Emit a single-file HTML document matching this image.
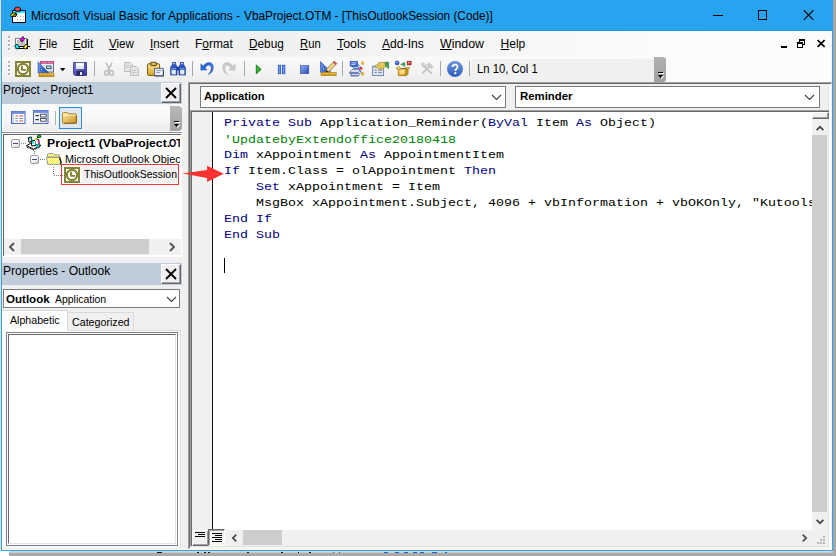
<!DOCTYPE html>
<html>
<head>
<meta charset="utf-8">
<title>Microsoft Visual Basic for Applications</title>
<style>
*{box-sizing:border-box;margin:0;padding:0}
html,body{width:836px;height:556px;overflow:hidden;background:#b4b4b4;font-family:"Liberation Sans",sans-serif;}
.a{position:absolute}
.t{position:absolute;white-space:pre;line-height:1;color:#000;transform-origin:0 0}
svg{position:absolute;overflow:visible}
.m{font-size:12px;top:38px}
.m u{text-decoration:underline;text-decoration-thickness:1px;text-underline-offset:1px}
.ph{background:#bfcddb}
.code{font-family:"Liberation Mono",monospace;font-size:13.333px;line-height:18.6916px;white-space:pre;color:#000;position:absolute;left:224px;transform:scaleY(.856);transform-origin:0 0}
.k{color:#000080}.g{color:#008000}
.sep{position:absolute;width:1px;height:15px;top:61px;background:#a8a8a8}
</style>
</head>
<body>

<!-- desktop bits behind window -->
<div class="a" style="left:0;top:0;width:2px;height:556px;background:#e4dcd8"></div>
<div class="a" style="left:833px;top:0;width:3px;height:556px;background:#a7a4a2"></div>
<div class="a" style="left:0;top:551px;width:836px;height:5px;background:#a9a9a9"></div>
<div class="a" style="left:0;top:551px;width:833px;height:2px;background:linear-gradient(#dcd8d6,#c4c2c0)"></div>
<div class="a" style="left:0;top:551px;width:9px;height:5px;background:#fff"></div>
<!-- window -->
<div class="a" style="left:1px;top:0;width:832px;height:551px;background:#fff;border:1px solid #2ea3ee;border-top:none"></div>
<div class="a" style="left:2px;top:548px;width:830px;height:2px;background:#fbf5f3"></div>
<div class="a" style="left:831px;top:31px;width:1px;height:519px;background:#fbf3f1"></div>
<div class="a" style="left:1px;top:0;width:832px;height:31px;background:#27a4ef"></div>
<div class="a" style="left:1px;top:30px;width:832px;height:1px;background:#1d9aea"></div>
<div class="t" style="left:31px;top:10.4px;font-size:12.5px;transform:scaleX(.9593)">Microsoft Visual Basic for Applications - </div>
<div class="t" style="left:244.2px;top:10.4px;font-size:12.5px;transform:scaleX(.9451)">VbaProject.OTM - [ThisOutlookSession (Code)]</div>

<svg style="left:10px;top:6px" width="17" height="18" viewBox="0 0 17 18" shape-rendering="crispEdges">
<rect x="2" y="4" width="14" height="13" fill="#000"/>
<rect x="3" y="5" width="12" height="11" fill="#fff"/>
<rect x="2" y="4" width="14" height="1" fill="#000080"/>
<rect x="3" y="5" width="12" height="2" fill="#00ffff"/>
<g fill="#b0b0b0"><rect x="7" y="10" width="1" height="1"/><rect x="10" y="10" width="1" height="1"/><rect x="13" y="10" width="1" height="1"/><rect x="7" y="13" width="1" height="1"/><rect x="10" y="13" width="1" height="1"/><rect x="13" y="13" width="1" height="1"/></g>
<path d="M3.8 3 L6 0.7 L9.2 0.7 L11.4 3.2 L10 5.7 L6 5.7 Z" fill="#000" shape-rendering="auto"/>
<path d="M4.8 3 L6.4 1.5 L8.8 1.5 L10.4 3.2 L9.2 4.8 L6.4 4.8 Z" fill="#ff4848" shape-rendering="auto"/>
<path d="M0 9 L3 6.5 L6 6.5 L7.5 8.5 L5.5 11 L3.5 11 L2.5 10 L1 11 Z" fill="#000" shape-rendering="auto"/>
<path d="M0.5 9.5 L3 7.2 L5 7.2 L2 10 Z" fill="#ffff00" shape-rendering="auto"/>
<path d="M3 9 L5.5 8 L6.5 9 L5 10.3 L3.5 10.3 Z" fill="#808000" shape-rendering="auto"/>
</svg>

<svg style="left:700px;top:0" width="133" height="31" viewBox="0 0 134 31" fill="none" stroke="#000" stroke-width="1">
<path d="M13 15.5 H23" shape-rendering="crispEdges"/>
<rect x="58.5" y="10.5" width="9" height="9" shape-rendering="crispEdges"/>
<path d="M104.6 10.2 L114.2 19.8 M114.2 10.2 L104.6 19.8" stroke-width="1.1"/>
</svg>

<div class="a" style="left:2px;top:31px;width:829px;height:51px;background:linear-gradient(to right,#f2f2f2 0,#f4f4f4 300px,#fbfbfb 640px,#fcfcfc 100%)"></div>
<div class="a" style="left:3px;top:32px;width:828px;height:24px;border-radius:3px 0 0 3px;background:linear-gradient(to right,#f0f0f0 0,#f1f1f1 300px,#fbfbfb 640px,#fcfcfc 100%)"></div>
<div class="a" style="left:3px;top:57px;width:652px;height:25px;border-radius:3px 0 0 3px;background:linear-gradient(#fafafa,#f3f3f3 60%,#ececec)"></div>
<div class="a" style="left:472px;top:59px;width:182px;height:23px;background:#f0f0f0"></div>
<div class="a" style="left:654px;top:57px;width:12px;height:25px;border-radius:0 3px 3px 0;background:linear-gradient(#b0b0b0,#a2a2a2)"></div>
<svg style="left:657px;top:72px" width="8" height="9" viewBox="0 0 8 9"><rect x="2" y="1" width="5" height="1" fill="#fff" shape-rendering="crispEdges"/><rect x="1" y="0" width="5" height="1" fill="#000" shape-rendering="crispEdges"/><path d="M2 4 H7 L4.5 7 Z" fill="#fff"/><path d="M1 3 H6 L3.5 6.2 Z" fill="#000"/></svg>
<div class="a" style="left:8px;top:36px;width:2px;height:2px;background:#b4b4b4;box-shadow:1px 1px 0 #fff"></div><div class="a" style="left:8px;top:40px;width:2px;height:2px;background:#b4b4b4;box-shadow:1px 1px 0 #fff"></div><div class="a" style="left:8px;top:44px;width:2px;height:2px;background:#b4b4b4;box-shadow:1px 1px 0 #fff"></div><div class="a" style="left:8px;top:48px;width:2px;height:2px;background:#b4b4b4;box-shadow:1px 1px 0 #fff"></div><div class="a" style="left:8px;top:61px;width:2px;height:2px;background:#b4b4b4;box-shadow:1px 1px 0 #fff"></div><div class="a" style="left:8px;top:65px;width:2px;height:2px;background:#b4b4b4;box-shadow:1px 1px 0 #fff"></div><div class="a" style="left:8px;top:69px;width:2px;height:2px;background:#b4b4b4;box-shadow:1px 1px 0 #fff"></div><div class="a" style="left:8px;top:73px;width:2px;height:2px;background:#b4b4b4;box-shadow:1px 1px 0 #fff"></div><div class="t m" style="left:39.4px;transform:scaleX(0.949)"><u>F</u>ile</div><div class="t m" style="left:73.4px;transform:scaleX(0.975)"><u>E</u>dit</div><div class="t m" style="left:109.2px;transform:scaleX(0.962)"><u>V</u>iew</div><div class="t m" style="left:149.6px;transform:scaleX(0.966)"><u>I</u>nsert</div><div class="t m" style="left:195.4px;transform:scaleX(0.994)">F<u>o</u>rmat</div><div class="t m" style="left:249.2px;transform:scaleX(0.983)"><u>D</u>ebug</div><div class="t m" style="left:300.3px;transform:scaleX(0.938)"><u>R</u>un</div><div class="t m" style="left:336.8px;transform:scaleX(1.035)"><u>T</u>ools</div><div class="t m" style="left:382.3px;transform:scaleX(1.011)"><u>A</u>dd-Ins</div><div class="t m" style="left:440px;transform:scaleX(1.031)"><u>W</u>indow</div><div class="t m" style="left:500.6px;transform:scaleX(1.0)"><u>H</u>elp</div>
<svg style="left:14px;top:36px" width="17" height="14" viewBox="0 0 17 14">
<rect x="1.5" y="2.5" width="11" height="10" fill="#fff" stroke="#808080" shape-rendering="crispEdges"/>
<rect x="3" y="4" width="8" height="7" fill="#c0c0c0" shape-rendering="crispEdges"/>
<path d="M13.5 3 V12.5 H2" stroke="#000" stroke-width="1" fill="none" shape-rendering="crispEdges"/>
<path d="M1 10.5 H16" stroke="#000" stroke-width="1" shape-rendering="crispEdges"/>
<path d="M6 3.5 L9 0.5 L10.5 3 L8 6 Z" fill="#ff00ff" stroke="#000" stroke-width=".8"/>
<path d="M0.5 10 L3 8 L5.5 11.5 L3.5 13.2 Z" fill="#00ffff" stroke="#000" stroke-width=".8"/>
<path d="M9.5 11.5 L12 8 L14 10 L11.5 13.2 Z" fill="#ffff00" stroke="#000" stroke-width=".8"/>
</svg>
<svg style="left:778px;top:36px" width="52" height="14" viewBox="0 0 52 14" shape-rendering="crispEdges">
<rect x="3" y="10" width="6" height="2" fill="#000"/>
<path d="M21 3 H27 V9 H25 V8 H26 V5 H22 V6 H21 Z" fill="#000"/>
<path d="M19 6 H25 V12 H19 Z M20 8 V11 H24 V8 Z" fill="#000" fill-rule="evenodd"/>
<path d="M39.6 4.2 L46.6 10.8 M46.6 4.2 L39.6 10.8" stroke="#000" stroke-width="1.7" fill="none" shape-rendering="auto"/>
</svg>
<div class="sep" style="left:94px"></div><div class="sep" style="left:192px"></div><div class="sep" style="left:244px"></div><div class="sep" style="left:342px"></div><div class="sep" style="left:440px"></div><div class="sep" style="left:469px"></div><div class="t" style="left:477.3px;top:63.4px;font-size:12.5px;transform:scaleX(.90)">Ln 10, Col 1</div>
<svg width="0" height="0" style="left:0;top:0">
<defs>
<pattern id="olv" width="2" height="2" patternUnits="userSpaceOnUse"><rect width="2" height="2" fill="#7e7e00"/><rect x="1" y="0" width="1" height="1" fill="#8c8c6c"/><rect x="0" y="1" width="1" height="1" fill="#8c8c6c"/></pattern>
<pattern id="yel" width="2" height="2" patternUnits="userSpaceOnUse"><rect width="2" height="2" fill="#ffff00"/><rect width="1" height="1" fill="#fff"/><rect x="1" y="1" width="1" height="1" fill="#fff"/></pattern>
<linearGradient id="gBlue" x1="0" y1="0" x2="1" y2="1"><stop offset="0" stop-color="#9bb4f0"/><stop offset="1" stop-color="#1f49b8"/></linearGradient>
<linearGradient id="gGold" x1="0" y1="0" x2="0" y2="1"><stop offset="0" stop-color="#ffe9a0"/><stop offset="1" stop-color="#d8a020"/></linearGradient>
<linearGradient id="gSave" x1="0" y1="0" x2="1" y2="1"><stop offset="0" stop-color="#7a7ae0"/><stop offset="1" stop-color="#34349a"/></linearGradient>
<linearGradient id="gHelp" x1="0" y1="0" x2="0" y2="1"><stop offset="0" stop-color="#6d98e0"/><stop offset="1" stop-color="#2a5cc0"/></linearGradient>
<linearGradient id="gFold" x1="0" y1="0" x2="1" y2="1"><stop offset="0" stop-color="#ffeeb0"/><stop offset="1" stop-color="#c89018"/></linearGradient>
</defs>
</svg>
<svg style="left:15px;top:61px" width="16" height="16" viewBox="0 0 16 16">
<rect width="16" height="16" fill="#fff"/>
<path d="M0 0 H16 V16 H0 Z M2 2 V14 H14 V2 Z" fill="url(#olv)" fill-rule="evenodd"/>
<circle cx="8" cy="8" r="5.1" fill="#fff" stroke="url(#olv)" stroke-width="2.2"/>
<path d="M7 4.8 V8.9 H11.2" fill="none" stroke="url(#olv)" stroke-width="1.9"/>
</svg><svg style="left:38px;top:61px" width="16" height="16" viewBox="0 0 16 16">
<defs><linearGradient id="gTri" x1="0" y1="0" x2="1" y2="0"><stop offset="0" stop-color="#6a9aec"/><stop offset=".6" stop-color="#2f62cc"/><stop offset="1" stop-color="#2450b0"/></linearGradient>
<linearGradient id="gWin" x1="0" y1="0" x2="0" y2="1"><stop offset="0" stop-color="#f2f5fa"/><stop offset="1" stop-color="#cfd8e8"/></linearGradient></defs>
<rect x="2.5" y="0.5" width="13" height="10.6" fill="url(#gWin)" stroke="#50607c" stroke-width=".9"/>
<rect x="2.1" y="0" width="14" height="2.8" fill="#c6487c"/>
<path d="M4 1.4 H9 M10 1.4 H14.6" stroke="#e8a0c0" stroke-width=".8"/>
<rect x="8.6" y="5.1" width="4.4" height="2.4" fill="#dfeaf2" stroke="#2f5868" stroke-width="1"/>
<path d="M0 0.8 L0 12 L10.8 12 Z" fill="url(#gTri)" stroke="#2450b0" stroke-width=".6"/>
<rect x="2.6" y="7.8" width="1.7" height="1.7" fill="#f4f8ff" stroke="#1c3c90" stroke-width=".6"/>
<rect x="1" y="12.1" width="15" height="3.7" fill="#c8920c" stroke="#a87808" stroke-width=".5"/>
<g fill="#ffe49a"><rect x="2.4" y="12.4" width=".9" height="1.7"/><rect x="4.4" y="12.4" width=".9" height="1.2"/><rect x="6.4" y="12.4" width=".9" height="1.7"/><rect x="8.4" y="12.4" width=".9" height="1.2"/><rect x="10.4" y="12.4" width=".9" height="1.7"/><rect x="12.4" y="12.4" width=".9" height="1.2"/><rect x="14.2" y="12.4" width=".9" height="1.7"/></g>
</svg><svg style="left:60px;top:68px" width="6" height="4" viewBox="0 0 6 4"><path d="M0 0 H5.4 L2.7 3.2 Z" fill="#000"/></svg><svg style="left:73px;top:62px" width="14" height="14" viewBox="0 0 14 14">
<path d="M0.5 0.5 H13.5 V13.5 H2 L0.5 12 Z" fill="url(#gSave)" stroke="#2c2c88" stroke-width=".8"/>
<rect x="3" y="0.8" width="8" height="6.2" fill="#f4f8ff"/>
<rect x="3" y="4" width="8" height="3" fill="#d4def4" opacity=".7"/>
<rect x="3.6" y="9" width="6.6" height="4.5" fill="#2a2a58"/>
<rect x="7" y="10" width="2" height="3" fill="#e8e8f4"/>
</svg><svg style="left:104px;top:62px" width="10" height="14" viewBox="0 0 10 14" fill="none" stroke="#bcbcbc" stroke-width="1.5">
<path d="M2 0.6 L6.2 9 M8 0.6 L3.8 9"/>
<ellipse cx="2.5" cy="11" rx="1.9" ry="2.2"/><ellipse cx="7.5" cy="11" rx="1.9" ry="2.2"/>
</svg><svg style="left:124px;top:62px" width="16" height="14" viewBox="0 0 16 14" fill="#e6e6e6" stroke="#bdbdbd" stroke-width="1">
<path d="M0.5 0.5 H6 L8.5 3 V9.5 H0.5 Z"/>
<path d="M6.5 4.5 H12 L14.5 7 V13.5 H6.5 Z"/>
<path d="M2 3.5 H6 M2 5.5 H5 M8 8.5 H12 M8 10.5 H13" stroke="#c8c8c8"/>
</svg><svg style="left:147px;top:62px" width="17" height="15" viewBox="0 0 17 15">
<rect x="0.6" y="1.8" width="12" height="11.6" rx="1" fill="url(#gGold)" stroke="#7a5408" stroke-width="1"/>
<rect x="3.6" y="0.3" width="5.8" height="3.4" rx=".8" fill="#caa238" stroke="#4a3808" stroke-width=".9"/>
<rect x="5.7" y="1.2" width="1.8" height="1.2" fill="#fff7c0"/>
<rect x="7.6" y="6.4" width="8.6" height="7.4" fill="#eef1f8" stroke="#50608c" stroke-width=".9"/>
<path d="M9 8.6 H14.6 M9 10.6 H13" stroke="#8a9cc4" stroke-width="1"/>
<path d="M7.6 14.1 H16.5 V8" stroke="#20283c" stroke-width=".7" fill="none"/>
</svg><svg style="left:170px;top:62px" width="16" height="14" viewBox="0 0 16 14">
<path d="M2.6 0.4 H5.6 V2.2 L7 4.5 V13 H0.6 V5.5 L2.6 2.2 Z" fill="#2c56c0" stroke="#17307c" stroke-width=".7"/>
<path d="M10.4 0.4 H13.4 V2.2 L15.4 5.5 V13 H9 V4.5 L10.4 2.2 Z" fill="#2c56c0" stroke="#17307c" stroke-width=".7"/>
<rect x="6.6" y="5" width="2.8" height="3.6" fill="#1b3a96"/>
<rect x="1.6" y="8" width="4.2" height="4.4" fill="#e4ecfa"/>
<rect x="10.2" y="8" width="4.2" height="4.4" fill="#e4ecfa"/>
<rect x="3" y="1.2" width="2" height="1" fill="#c8d8f8"/><rect x="11" y="1.2" width="2" height="1" fill="#c8d8f8"/>
<path d="M1.2 6.8 H6.4 M9.6 6.8 H14.8" stroke="#9ab4ee" stroke-width=".9"/>
</svg><svg style="left:200.4px;top:62px" width="15" height="13" viewBox="0 0 15 13">
<defs><linearGradient id="gUn" x1="0" y1="0" x2="1" y2="1"><stop offset="0" stop-color="#2a5ccc"/><stop offset=".6" stop-color="#3a74e0"/><stop offset="1" stop-color="#2a5ccc"/></linearGradient></defs>
<path d="M0.8 1.8 L0.8 8.2 L7.2 8 L5.2 6 C5.8 5 6.6 4 7.6 3.4 C9.2 2.7 11 3.5 11.2 5.6 C11.4 8 10.2 10.6 8 12.6 C10.2 12 11.8 10.5 12.7 8.5 C13.9 5.5 13.5 2.2 11 1 C8 -0.3 5 1.4 3.2 4.1 Z" fill="url(#gUn)" stroke="#2454c0" stroke-width=".4"/>
</svg><svg style="left:222px;top:62.4px" width="15" height="13" viewBox="0 0 15 13">
<g transform="translate(14,0) scale(-1,1)"><path d="M0.8 1.8 L0.8 8.2 L7.2 8 L5.2 6 C5.8 5 6.6 4 7.6 3.4 C9.2 2.7 11 3.5 11.2 5.6 C11.4 8 10.2 10.6 8 12.6 C10.2 12 11.8 10.5 12.7 8.5 C13.9 5.5 13.5 2.2 11 1 C8 -0.3 5 1.4 3.2 4.1 Z" fill="#c8c8c8" stroke="#bcbcbc" stroke-width=".4"/></g>
</svg><svg style="left:255px;top:64px" width="8" height="11" viewBox="0 0 8 11"><path d="M1.3 1 L6.1 5.4 L1.3 9.8 Z" fill="#2cb82c" stroke="#0f7a10" stroke-width=".9" stroke-linejoin="round"/></svg>
<svg style="left:277px;top:65px" width="9" height="9" viewBox="0 0 9 9"><rect x="1.3" y="0.3" width="2.4" height="8.4" fill="#6f9af0" stroke="#2450c0" stroke-width=".8"/><rect x="5.5" y="0.3" width="2.4" height="8.4" fill="#6f9af0" stroke="#2450c0" stroke-width=".8"/></svg>
<svg style="left:300px;top:65px" width="9" height="9" viewBox="0 0 9 9"><rect x="0.5" y="0.7" width="8.2" height="7.8" fill="url(#gBlue)" stroke="#2a4cb0" stroke-width=".7"/></svg>
<svg style="left:320px;top:61px" width="17" height="15" viewBox="0 0 17 15">
<path d="M0.5 0.6 V11.2 H10.8 Z" fill="url(#gTri)" stroke="#2450b0" stroke-width=".7"/>
<rect x="2.6" y="7" width="1.8" height="1.8" fill="#f4f8ff" stroke="#1c3c90" stroke-width=".6"/>
<path d="M6.2 8.6 L13.2 1.2 L15.8 3.6 L8.6 11 L5.4 11.8 Z" fill="#ecc878" stroke="#8a6428" stroke-width=".7"/>
<path d="M7.4 9.8 L14.4 2.4" stroke="#fbe8b4" stroke-width="1"/>
<path d="M13.2 1.2 L14.4 0.2 L16.8 2.6 L15.8 3.6 Z" fill="#e0606c" stroke="#8a2030" stroke-width=".6"/>
<path d="M5.4 11.8 L6.2 8.6 L8.6 11 Z" fill="#3a2c1c"/>
<rect x="1" y="11.4" width="15.2" height="3.3" fill="#cc960e" stroke="#a87808" stroke-width=".5"/>
<g fill="#ffe49a"><rect x="2.6" y="11.8" width=".9" height="1.6"/><rect x="4.6" y="11.8" width=".9" height="1.1"/><rect x="6.6" y="11.8" width=".9" height="1.6"/><rect x="8.6" y="11.8" width=".9" height="1.1"/><rect x="10.6" y="11.8" width=".9" height="1.6"/><rect x="12.6" y="11.8" width=".9" height="1.1"/><rect x="14.4" y="11.8" width=".9" height="1.6"/></g>
</svg><svg style="left:349px;top:61px" width="16" height="16" viewBox="0 0 16 16">
<path d="M0.4 11.4 L3.2 8.6 H11.6 L9.4 11.4 Z" fill="#e8eef8" stroke="#4058a0" stroke-width=".7"/>
<path d="M0.4 11.4 H9.4 V13 H0.4 Z" fill="#6078b8"/>
<path d="M1.6 14.2 L3.6 12.4 H11.4 L10 14.2 Z" fill="#f2f5fb" stroke="#4058a0" stroke-width=".6"/>
<path d="M1.6 14.2 H10 V15.4 H1.6 Z" fill="#5068a8"/>
<rect x="1.2" y="0.5" width="7.4" height="4.6" fill="#3a6ad8" stroke="#2448b0" stroke-width=".7"/>
<path d="M2.4 1.9 H7.4 M2.4 3.5 H6.4" stroke="#cfe0ff" stroke-width=".9"/>
<path d="M3 5.4 L5 7.6 H10.6 L8.8 5.4 Z" fill="#4c7ae0" stroke="#2448b0" stroke-width=".6"/>
<path d="M4.6 6.4 H9" stroke="#d6e4ff" stroke-width=".8"/>
<path d="M8.6 3 L12.2 6.6 M10 8.6 L12.6 11.8" stroke="#3a64d0" stroke-width="1"/>
<circle cx="12" cy="7.2" r="1.5" fill="#e83838"/>
<path d="M13.6 0.2 L15.2 2.2 L13.6 4.2 L12 2.2 Z" fill="#f6c428" stroke="#b08410" stroke-width=".4"/>
<path d="M13.6 11 L15.2 13 L13.6 15 L12 13 Z" fill="#f6c428" stroke="#b08410" stroke-width=".4"/>
</svg><svg style="left:372px;top:62px" width="17" height="14" viewBox="0 0 17 14">
<rect x="0.6" y="4" width="11" height="9.6" fill="#e2e8f2" stroke="#6c80ac" stroke-width=".9"/>
<rect x="0.6" y="4" width="11" height="1.8" fill="#9cb0d6"/>
<path d="M2.4 8.2 H4.8 M6.2 8.2 H10 M2.4 10.6 H4.8 M6.2 10.6 H10" stroke="#6c84b4" stroke-width="1"/>
<path d="M3 4.4 L7.2 0.6 L12.8 0.4 L14 3.6 L10.6 7.2 L7 7 Z" fill="#ecd060" stroke="#8a7020" stroke-width=".6"/>
<path d="M5.4 4 L7.8 1.8 M7 5.2 L9.6 2.6 M8.8 6.2 L11.4 3.6 M6 2.8 L9.6 6.2" stroke="#b89c38" stroke-width=".5"/>
<path d="M13 0.4 L16.6 0 V6.6 L13.8 4.4 Z" fill="#42a456" stroke="#1c6c2c" stroke-width=".5"/>
</svg><svg style="left:395px;top:61px" width="17" height="15" viewBox="0 0 17 15">
<path d="M3.3 8 H11 V14.6 H3.3 Z" fill="url(#gGold)" stroke="#a07410" stroke-width=".8"/>
<path d="M11 8 L13.1 6.8 V13 L11 14.6 Z" fill="#c89418" stroke="#a07410" stroke-width=".6"/>
<path d="M0.9 7.5 L3.6 5.4 L6 7.5 L3.3 8.6 Z" fill="#f6d868" stroke="#a07410" stroke-width=".6"/>
<path d="M11 8 L11.7 6.6 H15 L13.1 8.2 Z" fill="#f6d868" stroke="#a07410" stroke-width=".6"/>
<path d="M3.3 8 L6 7.5 L11.7 6.6 L11 8 Z" fill="#8a6410"/>
<rect x="5" y="9.6" width="4" height="3.4" fill="#ffe890" opacity=".7"/>
<circle cx="2.1" cy="1.9" r="2" fill="#3a56dc" stroke="#1c2c80" stroke-width=".5"/>
<circle cx="1.7" cy="1.4" r=".7" fill="#c8d0ff"/>
<path d="M5.7 3.3 L9.9 1.2 V5.4 Z" fill="#3aa850" stroke="#2c7c3c" stroke-width=".4"/>
<rect x="12.2" y="0.2" width="3.9" height="3.7" fill="#e04030" stroke="#701810" stroke-width=".6"/>
<rect x="13" y="0.9" width="1.4" height="1.3" fill="#ffb8a8"/>
</svg><svg style="left:420px;top:62px" width="14" height="13" viewBox="0 0 14 13" fill="none" stroke="#c2c2c2">
<path d="M2.2 11.6 L9.4 4.4" stroke-width="1.8"/>
<path d="M7 2.4 L9.4 0.8 L13.2 4.8 L11 6.8 Z" fill="#cccccc" stroke-width=".6"/>
<path d="M11.6 11.6 L4.6 4.6" stroke-width="1.8"/>
<path d="M1.6 3.2 C1.4 1.6 2.8 0.5 4.4 0.8 L3.6 2.4 L4.8 3.4 L6.2 2.2 C6.9 3.6 6.1 5.1 4.6 5.3 C3.2 5.5 1.8 4.6 1.6 3.2 Z" fill="#cccccc" stroke-width=".5"/>
</svg><svg style="left:447px;top:61px" width="16" height="16" viewBox="0 0 16 16">
<circle cx="8" cy="8" r="7.7" fill="url(#gHelp)" stroke="#3a68c8" stroke-width=".5"/>
<path d="M5.6 6 C5.6 3 10.6 3 10.6 5.8 C10.6 7.6 8.3 7.8 8.3 10" fill="none" stroke="#fff" stroke-width="1.8"/>
<rect x="7.3" y="11.2" width="2" height="2" fill="#fff"/>
</svg>
<div class="a" style="left:2px;top:82px;width:186px;height:466px;background:#f0f0f0"></div>
<div class="a" style="left:2px;top:82px;width:180px;height:467px;background:#f0f0f0"></div>
<!-- Project header -->
<div class="a ph" style="left:2px;top:82px;width:180px;height:22px"></div>
<div class="t" style="left:2.8px;top:83.5px;font-size:12px;transform:scaleX(.985)">Project - Project1</div>
<div class="a" style="left:161px;top:83px;width:20px;height:20px;background:#f0f0f0;border:1px solid;border-color:#fff #696969 #696969 #fff;box-shadow:inset -1px -1px 0 #a0a0a0"></div>
<svg style="left:165px;top:87px" width="12" height="12" viewBox="0 0 12 12"><path d="M1 1 L11 11 M11 1 L1 11" stroke="#000" stroke-width="1.9" stroke-linecap="butt"/></svg>
<div class="a" style="left:2px;top:104px;width:180px;height:28px;background:#f9f9f9"></div>
<div class="a" style="left:4px;top:106px;width:167px;height:25px;border-radius:3px 0 0 3px;background:linear-gradient(#fdfdfd,#f6f6f6 60%,#ececec)"></div>
<div class="a" style="left:170px;top:106px;width:12px;height:25px;border-radius:0 4px 4px 0;background:linear-gradient(#b8b8b8,#a2a2a2)"></div>
<svg style="left:173px;top:121px" width="8" height="9" viewBox="0 0 8 9"><rect x="2" y="1" width="5" height="1" fill="#fff" shape-rendering="crispEdges"/><rect x="1" y="0" width="5" height="1" fill="#000" shape-rendering="crispEdges"/><path d="M2 4 H7 L4.5 7 Z" fill="#fff"/><path d="M1 3 H6 L3.5 6.2 Z" fill="#000"/></svg>
<!-- view code -->
<svg style="left:11px;top:111px" width="15" height="13" viewBox="0 0 15 13">
<rect x="0.5" y="0.5" width="13.5" height="12" fill="#fdfdff" stroke="#4a6cc0" stroke-width="1"/>
<rect x="0.5" y="0.5" width="13.5" height="2.4" fill="#6c8ce0"/>
<rect x="1" y="3" width="2" height="9" fill="#c4d0ec"/>
<path d="M4.4 5 H7 M8.2 5 H12 M8.2 10 H12" stroke="#e84c3c" stroke-width="1.2"/>
<path d="M4.4 7.5 H7 M8.2 7.5 H12 M4.4 10 H7" stroke="#7c94b8" stroke-width="1.2"/>
</svg>
<!-- view object -->
<svg style="left:33px;top:110px" width="16" height="14" viewBox="0 0 16 14">
<rect x="0.5" y="0.5" width="14.5" height="13" fill="#f0f4fc" stroke="#4a6cc0" stroke-width="1"/>
<rect x="0.5" y="0.5" width="14.5" height="2.4" fill="#6c8ce0"/>
<path d="M2.4 5.6 H6 M2.4 9.6 H6" stroke="#384050" stroke-width="1.2"/>
<rect x="7.6" y="4.2" width="5.6" height="2.8" fill="#fff" stroke="#384050" stroke-width=".9"/>
<rect x="7.6" y="8.4" width="5.6" height="2.8" fill="#fff" stroke="#384050" stroke-width=".9"/>
</svg>
<div class="a" style="left:55px;top:111px;width:1px;height:14px;background:#b0b0b0"></div>
<!-- toggle folders (active) -->
<div class="a" style="left:59px;top:107px;width:23px;height:22px;background:#dde7f2;border:1px solid #2e8be0"></div>
<svg style="left:62px;top:112px" width="15" height="12" viewBox="0 0 15 12">
<path d="M0.5 1.4 Q0.5 0.5 1.4 0.5 H5.4 L6.6 1.8 H13.4 Q14.4 1.8 14.4 2.8 V10.6 Q14.4 11.5 13.4 11.5 H1.4 Q0.5 11.5 0.5 10.6 Z" fill="url(#gFold)" stroke="#a07818" stroke-width=".8"/>
<path d="M1 3.2 H14" stroke="#fff6d0" stroke-width=".8"/>
<path d="M14.4 3 V11 H2" stroke="#3c2c08" stroke-width=".7" fill="none" opacity=".6"/>
</svg>

<div class="a" style="left:2px;top:132px;width:180px;height:1px;background:#828790"></div>
<div class="a" style="left:2px;top:133px;width:180px;height:124px;background:#fff"></div>
<div class="a" style="left:3px;top:134px;width:178px;height:122px;border-top:1px solid #646464;border-left:1px solid #646464"></div>
<div class="a" style="left:4px;top:135px;width:176px;height:103px;overflow:hidden">
 <div class="t" style="left:42.9px;top:2.5px;font-size:11px;font-weight:bold;transform:scaleX(1.1127)">Project1 (VbaProject.</div>
 <div class="t" style="left:165px;top:2.5px;font-size:11px;font-weight:bold;transform:scaleX(.85)">OTM)</div>
 <div class="t" style="left:61.2px;top:19px;font-size:11px;transform:scaleX(.985)">Microsoft Outlook Objects</div>
</div>
<div class="a" style="left:82px;top:167px;width:96px;height:16px;background:#f0f0f0"></div>
<div class="t" style="left:84.3px;top:169px;font-size:11px;transform:scaleX(.9506)">ThisOutlookSession</div>
<div class="a" style="left:11px;top:139px;width:9px;height:9px;border:1px solid #9a9a9a;border-radius:2px;background:linear-gradient(135deg,#fff 30%,#d8d8d8)"></div><div class="a" style="left:13px;top:143px;width:5px;height:1px;background:#3a4fa0"></div><div class="a" style="left:30px;top:155px;width:9px;height:9px;border:1px solid #9a9a9a;border-radius:2px;background:linear-gradient(135deg,#fff 30%,#d8d8d8)"></div><div class="a" style="left:32px;top:159px;width:5px;height:1px;background:#3a4fa0"></div><svg style="left:0;top:132px" width="90" height="60" viewBox="0 0 90 60" shape-rendering="crispEdges" fill="none" stroke="#808080" stroke-width="1" stroke-dasharray="1 1">
<path d="M21 11.5 H26"/><path d="M34.5 19 V23"/><path d="M40 27.5 H46"/><path d="M53.5 35 V43"/><path d="M54 43.5 H63"/>
</svg><svg style="left:26px;top:135px" width="16" height="15" viewBox="0 0 16 15">
<path d="M0.4 10.6 L4.6 8.4 L15 10.4 L7.6 14.2 Z" fill="#fff" stroke="#000" stroke-width="1"/>
<path d="M0.8 12.2 L7.6 15 L14.6 11.8" fill="none" stroke="#000" stroke-width=".9" stroke-dasharray="2 1"/>
<path d="M2.4 2.6 L5.4 2 L6 6.6 L3 7.2 Z" fill="#fff" stroke="#000" stroke-width="1"/>
<path d="M3.2 3 L5.4 2.6 L5.6 4 L3.4 4.4 Z" fill="#00e8e8"/>
<path d="M5.2 6 L9.4 5.4 L10 10.4 L5.8 11 Z" fill="#fff" stroke="#000" stroke-width="1"/>
<path d="M5.8 6.6 L8 6.2 L8.4 8.4 L6.2 8.8 Z" fill="#00e8e8"/>
<path d="M8.8 4.2 L12.8 4.6 L13.2 9.2 L10 9.6" fill="#fff" stroke="#000" stroke-width="1"/>
<path d="M9.4 9.6 L12.6 9.2 L13 11.6 L10.4 12.2 Z" fill="#00d8e0"/>
<path d="M10.4 3.6 L12.6 1.6" stroke="#000" stroke-width="1"/>
<rect x="9" y="3.4" width="2.2" height="1.5" fill="#f0e000"/>
<ellipse cx="13.2" cy="1.4" rx="1.9" ry="1.2" fill="#00d020" stroke="#000" stroke-width=".7"/>
<ellipse cx="12.6" cy="6.8" rx=".9" ry="1.3" fill="#ff20f0"/>
</svg><svg style="left:46px;top:153px" width="16" height="12" viewBox="0 0 16 12">
<path d="M1.4 2 Q1.4 0.6 2.8 0.6 H7 L8.2 1.8 H13.4 V4 H1.4 Z" fill="url(#yel)" stroke="#808080" stroke-width=".8"/>
<path d="M0.5 4.4 H13.6 L14.6 11.4 H1.8 Z" fill="url(#yel)" stroke="#808080" stroke-width=".8"/>
<path d="M13.6 4.4 L15.2 9.6 L14.6 11.4" fill="none" stroke="#000" stroke-width="1.2"/>
</svg><svg style="left:64px;top:167px" width="16" height="16" viewBox="0 0 16 16">
<rect width="16" height="16" fill="#fff"/>
<path d="M0 0 H16 V16 H0 Z M2 2 V14 H14 V2 Z" fill="url(#olv)" fill-rule="evenodd"/>
<circle cx="8" cy="8" r="5.1" fill="#fff" stroke="url(#olv)" stroke-width="2.2"/>
<path d="M7 4.8 V8.9 H11.2" fill="none" stroke="url(#olv)" stroke-width="1.9"/>
</svg><div class="a" style="left:61px;top:164px;width:118px;height:21px;border:1px solid #f83838"></div>
<div class="a" style="left:4px;top:239px;width:177px;height:16px;background:#f0f0f0"></div>
<div class="a" style="left:21px;top:239px;width:128px;height:15px;background:#cdcdcd"></div>
<svg style="left:8px;top:241.5px" width="8" height="10" viewBox="0 0 8 10"><path d="M6 1 L2 5 L6 9" fill="none" stroke="#505050" stroke-width="1.8"/></svg>
<svg style="left:168px;top:241.5px" width="8" height="10" viewBox="0 0 8 10"><path d="M2 1 L6 5 L2 9" fill="none" stroke="#505050" stroke-width="1.8"/></svg>

<div class="a ph" style="left:2px;top:263px;width:180px;height:22px"></div>
<div class="t" style="left:2.8px;top:265px;font-size:12px;transform:scaleX(1.005)" id="ptitle">Properties - Outlook</div>
<div class="a" style="left:161px;top:264px;width:20px;height:20px;background:#f0f0f0;border:1px solid;border-color:#fff #696969 #696969 #fff;box-shadow:inset -1px -1px 0 #a0a0a0"></div>
<svg style="left:165px;top:268px" width="12" height="12" viewBox="0 0 12 12"><path d="M1 1 L11 11 M11 1 L1 11" stroke="#000" stroke-width="1.9" stroke-linecap="butt"/></svg>
<div class="a" style="left:3px;top:289px;width:177px;height:19px;background:#fff;border:1px solid #7a7a7a"></div>
<div class="t" style="left:6.2px;top:293.5px;font-size:11px;font-weight:bold;transform:scaleX(1.05)" id="pc1">Outlook</div>
<div class="t" style="left:55px;top:293.5px;font-size:11px;transform:scaleX(.951)" id="pc2">Application</div>
<svg style="left:165.5px;top:296px" width="11" height="7" viewBox="0 0 11 7"><path d="M1 1 L5.5 5.5 L10 1" fill="none" stroke="#404040" stroke-width="1.1"/></svg>
<!-- tab body -->
<div class="a" style="left:2px;top:330px;width:179px;height:218px;background:#fff;border-top:1px solid #dcdcdc;border-right:1px solid #dcdcdc"></div>
<div class="a" style="left:6px;top:332px;width:172px;height:214px;background:#fff;border:1px solid #7b828e"></div>
<div class="a" style="left:8px;top:334px;width:168px;height:210px;background:#fff;border:1px solid;border-color:#696969 #e3e3e3 #e3e3e3 #696969"></div>
<div class="a" style="left:2px;top:310px;width:66px;height:21px;background:#fff;border-top:1px solid #d9d9d9;border-right:1px solid #d9d9d9"></div>
<div class="a" style="left:68px;top:312px;width:66px;height:18px;background:#f0f0f0;border-top:1px solid #d9d9d9;border-right:1px solid #d9d9d9"></div>
<div class="t" style="left:10px;top:314.7px;font-size:11px;transform:scaleX(.965)" id="tb1">Alphabetic</div>
<div class="t" style="left:71.8px;top:316.5px;font-size:11px;transform:scaleX(.97)" id="tb2">Categorized</div>

<div class="a" style="left:188px;top:82px;width:641px;height:465px;background:#f0f0f0"></div>
<div class="a" style="left:188px;top:82px;width:1px;height:467px;background:#a0a0a0"></div>
<div class="a" style="left:189px;top:83px;width:1px;height:465px;background:#696969"></div>
<div class="a" style="left:188px;top:82px;width:644px;height:1px;background:#a0a0a0"></div>
<div class="a" style="left:189px;top:83px;width:642px;height:1px;background:#696969"></div>
<div class="a" style="left:828px;top:84px;width:1px;height:463px;background:#e3e3e3"></div>
<div class="a" style="left:190px;top:546px;width:639px;height:1px;background:#e3e3e3"></div>
<div class="a" style="left:829px;top:84px;width:2px;height:464px;background:#fff"></div>
<!-- combos -->
<div class="a" style="left:200px;top:86px;width:306px;height:22px;background:#fff;border:1px solid #7a7a7a"></div>
<div class="a" style="left:515px;top:86px;width:305px;height:22px;background:#fff;border:1px solid #7a7a7a"></div>
<div class="t" style="left:204.2px;top:90.8px;font-size:10.5px;font-weight:bold;transform:scaleX(1.06)" id="cb1">Application</div>
<div class="t" style="left:519.6px;top:90.8px;font-size:10.5px;font-weight:bold;transform:scaleX(1.083)" id="cb2">Reminder</div>
<svg style="left:491px;top:94px" width="11" height="7" viewBox="0 0 11 7"><path d="M1 1 L5.5 5.5 L10 1" fill="none" stroke="#404040" stroke-width="1.1"/></svg>
<svg style="left:804px;top:94px" width="11" height="7" viewBox="0 0 11 7"><path d="M1 1 L5.5 5.5 L10 1" fill="none" stroke="#404040" stroke-width="1.1"/></svg>
<!-- editor -->
<div class="a" style="left:190px;top:110px;width:639px;height:1px;background:#a0a0a0"></div>
<div class="a" style="left:191px;top:111px;width:638px;height:1px;background:#696969"></div>
<div class="a" style="left:190px;top:110px;width:1px;height:436px;background:#a0a0a0"></div>
<div class="a" style="left:191px;top:111px;width:1px;height:435px;background:#696969"></div>
<div class="a" style="left:192px;top:112px;width:620px;height:418px;background:#fff"></div>
<div class="a" style="left:192px;top:112px;width:20px;height:418px;background:#f0f0f0"></div>
<div class="a" style="left:212px;top:112px;width:1px;height:417px;background:#101010"></div>
<!-- v scrollbar -->
<div class="a" style="left:812px;top:112px;width:16px;height:418px;background:#f0f0f0"></div>
<div class="a" style="left:812px;top:112px;width:17px;height:7px;background:#f0f0f0;border:1px solid;border-color:#fff #696969 #696969 #fff;box-shadow:inset -1px -1px 0 #a0a0a0"></div>
<div class="a" style="left:812px;top:135px;width:15px;height:377px;background:#cdcdcd"></div>
<svg style="left:815px;top:124px" width="10" height="8" viewBox="0 0 10 8"><path d="M1.6 6.2 L5 2.8 L8.4 6.2" fill="none" stroke="#484848" stroke-width="1.8"/></svg>
<svg style="left:815px;top:518px" width="10" height="8" viewBox="0 0 10 8"><path d="M1.6 1.8 L5 5.2 L8.4 1.8" fill="none" stroke="#484848" stroke-width="1.8"/></svg>
<!-- h scrollbar row -->
<div class="a" style="left:192px;top:530px;width:636px;height:16px;background:#f0f0f0"></div>
<div class="a" style="left:243px;top:530px;width:39px;height:15px;background:#cdcdcd"></div>
<svg style="left:229.5px;top:532.5px" width="8" height="10" viewBox="0 0 8 10"><path d="M6.3 1.6 L2.8 5 L6.3 8.4" fill="none" stroke="#505050" stroke-width="1.8"/></svg>
<svg style="left:800.6px;top:532.5px" width="8" height="10" viewBox="0 0 8 10"><path d="M1.7 1.6 L5.2 5 L1.7 8.4" fill="none" stroke="#505050" stroke-width="1.8"/></svg>
<!-- view buttons -->
<div class="a" style="left:192px;top:530px;width:17px;height:16px;background:#f0f0f0;border:1px solid;border-color:#fff #696969 #696969 #fff;box-shadow:inset -1px -1px 0 #a0a0a0"></div>
<div class="a" style="left:208px;top:529px;width:17px;height:17px;background:#f6f6f6;border:1px solid;border-color:#696969 #fff #fff #696969;box-shadow:inset 1px 1px 0 #a0a0a0"></div>
<svg style="left:195px;top:532px" width="11" height="6" viewBox="0 0 11 6" shape-rendering="crispEdges"><path d="M0 0.5 H10 M3 2.5 H10 M0 4.5 H10" stroke="#000" stroke-width="1"/></svg>
<svg style="left:212px;top:533px" width="11" height="10" viewBox="0 0 11 10" shape-rendering="crispEdges"><path d="M0 0.5 H10 M3 2.5 H10 M0 4.5 H10 M3 6.5 H10 M0 8.5 H10" stroke="#000" stroke-width="1"/></svg>
<!-- size grip -->
<svg style="left:816px;top:535px" width="10" height="10" viewBox="0 0 10 10" shape-rendering="crispEdges" fill="#b8b8b8"><rect x="7" y="1" width="2" height="2"/><rect x="4" y="4" width="2" height="2"/><rect x="7" y="4" width="2" height="2"/><rect x="1" y="7" width="2" height="2"/><rect x="4" y="7" width="2" height="2"/><rect x="7" y="7" width="2" height="2"/></svg>
<div class="a" style="left:213px;top:112px;width:599px;height:418px;overflow:hidden"><div class="code" style="left:11px;top:4px"><span class="k">Private Sub</span> Application_Reminder(<span class="k">ByVal</span> Item <span class="k">As</span> Object)
<span class="g">'UpdatebyExtendoffice20180418</span>
<span class="k">Dim</span> xAppointment <span class="k">As</span> AppointmentItem
<span class="k">If</span> Item.Class = olAppointment <span class="k">Then</span>
    <span class="k">Set</span> xAppointment = Item
    MsgBox xAppointment.Subject, 4096 + vbInformation + vbOKOnly, "Kutools for Outlook"
<span class="k">End If</span>
<span class="k">End Sub</span></div></div>
<div class="a" style="left:224px;top:258px;width:1px;height:15px;background:#000"></div>
<!-- red arrow -->
<svg style="left:180px;top:160px" width="50" height="28" viewBox="0 0 50 28">
<path d="M2.6 13.5 L27.1 10 L27.1 5.8 L43.7 13.7 L27.1 22 L27.1 18 Z" fill="#fa3232"/>
</svg>
<div class="a" style="left:157px;top:552px;width:5px;height:1px;background:#111"></div><div class="a" style="left:197px;top:552px;width:2px;height:1px;background:#111"></div><div class="a" style="left:204px;top:552px;width:2px;height:1px;background:#111"></div><div class="a" style="left:208px;top:552px;width:2px;height:1px;background:#111"></div><div class="a" style="left:247px;top:552px;width:2px;height:1px;background:#111"></div><div class="a" style="left:281px;top:552px;width:2px;height:1px;background:#111"></div><div class="a" style="left:298px;top:552px;width:1px;height:1px;background:#111"></div><div class="a" style="left:309px;top:552px;width:2px;height:1px;background:#111"></div><div class="a" style="left:333px;top:552px;width:1px;height:1px;background:#1a5fc0"></div><div class="a" style="left:339px;top:552px;width:1px;height:1px;background:#1a5fc0"></div><div class="a" style="left:384px;top:552px;width:4px;height:1px;background:#1a5fc0"></div><div class="a" style="left:395px;top:552px;width:4px;height:1px;background:#1a5fc0"></div><div class="a" style="left:404px;top:552px;width:4px;height:1px;background:#1a5fc0"></div><div class="a" style="left:413px;top:552px;width:4px;height:1px;background:#1a5fc0"></div><div class="a" style="left:420px;top:552px;width:4px;height:1px;background:#1a5fc0"></div><div class="a" style="left:432px;top:552px;width:5px;height:1px;background:#1a5fc0"></div><div class="a" style="left:445px;top:552px;width:2px;height:1px;background:#1a5fc0"></div>
</body>
</html>
